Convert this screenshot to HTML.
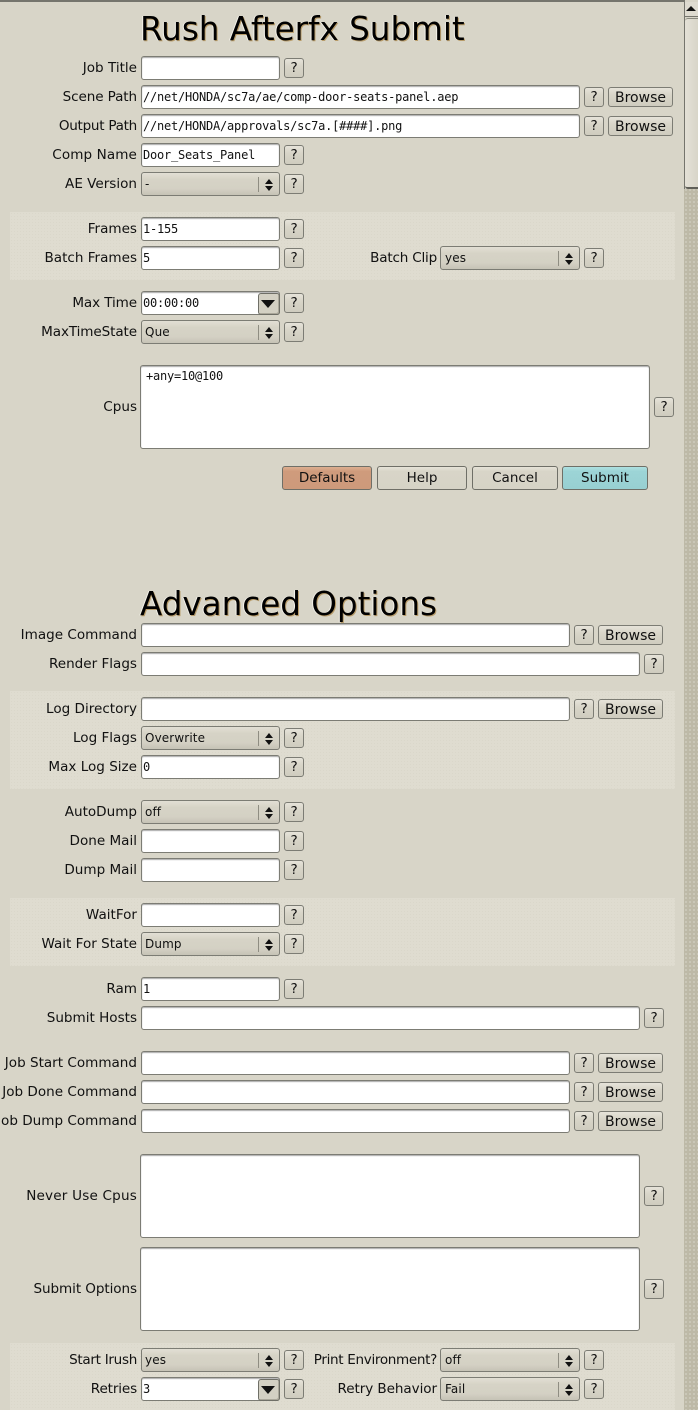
<!DOCTYPE html>
<html><head><meta charset="utf-8"><style>
html,body{margin:0;padding:0;background:#d8d5c8;}
body{position:relative;width:698px;height:1410px;overflow:hidden;font-family:"DejaVu Sans","Liberation Sans",sans-serif;color:#111;}
div,span{position:absolute;box-sizing:border-box;}
.top{left:0;top:0;width:684px;height:2px;background:#75756d;}
.h{left:140px;font-size:32.6px;line-height:38px;white-space:nowrap;color:#000;text-shadow:1px 1px 0 #b89c6a,-1px 0 0 #f4f2ea;}
.b{left:10px;width:665px;background:#dfdcd0;background-image:radial-gradient(#dad7ca .6px,transparent .8px);background-size:3px 3px;}
.l{right:561px;height:24px;line-height:25px;font-size:13.55px;white-space:nowrap;text-align:right;}
.i{left:141px;height:24px;background:#fff;border:1px solid #7c7c74;border-radius:3px;box-shadow:inset 0 1px 1px #aaa;font:12px/23px "DejaVu Sans Mono","Liberation Mono",monospace;letter-spacing:-.22px;padding-left:1px;color:#111;white-space:nowrap;}
.s{height:24px;width:139px;border:1px solid #7c7c74;border-radius:3px;background:linear-gradient(#e2dfd4,#d6d3c6 30%,#d4d1c4 70%,#c6c3b6);font:12px/23px "DejaVu Sans","Liberation Sans",sans-serif;letter-spacing:.12px;padding-left:3px;}
.s i{position:absolute;left:116px;top:4px;height:15px;width:1px;background:#8f8d82;}
.s b,.s u{position:absolute;left:123px;width:0;height:0;border-left:4px solid transparent;border-right:4px solid transparent;}
.s b{top:6px;border-bottom:5px solid #111;}.s u{top:13px;border-top:5px solid #111;}
.s.r{left:440px;width:140px;padding-left:4px;}
.s.r i{left:117px;}.s.r b,.s.r u{left:124px;}
.q,.br{height:20px;border:1px solid #7c7c74;border-radius:3px;background:linear-gradient(#e6e3d9,#d8d5c8 40%,#cfccbf);text-align:center;line-height:19px;}
.q{width:20px;font-family:"DejaVu Sans Mono",monospace;font-size:13.5px;}
.br{width:65px;font-size:14px;line-height:20px;}
.a{height:24px;top:466px;width:90px;border:1px solid #6f6f67;border-radius:3px;text-align:center;font-size:13.5px;line-height:22px;background:linear-gradient(#e6e3d8,#d8d5c8 20%,#d6d3c6);}
.c{left:141px;width:139px;}
.c i{position:absolute;left:116px;top:1px;width:20px;height:20px;background:#d3d0c3;border:1px solid #6f6f67;border-radius:3px;box-shadow:inset -1px -1px 0 #aaa79a;}
.c i:after{content:"";position:absolute;left:2px;top:6px;border-left:7px solid transparent;border-right:7px solid transparent;border-top:8px solid #111;}
.ta{left:140px;border:1px solid #7c7c74;border-radius:3px;background:#fff;box-shadow:inset 0 1px 1px #aaa;font:12px/16px "DejaVu Sans Mono","Liberation Mono",monospace;letter-spacing:-.22px;padding:2px 5px;}
</style></head><body>
<div class="top"></div>
<div class="h" style="top:10px">Rush Afterfx Submit</div>

<div class="l" style="top:56px">Job Title</div><div class="i" style="top:56px;width:139px"></div><div class="q" style="left:284px;top:58px">?</div>
<div class="l" style="top:85px;letter-spacing:-.1px">Scene Path</div><div class="i" style="top:85px;width:439px">//net/HONDA/sc7a/ae/comp-door-seats-panel.aep</div><div class="q" style="left:584px;top:87px">?</div><div class="br" style="left:608px;top:87px">Browse</div>
<div class="l" style="top:114px;letter-spacing:-.27px">Output Path</div><div class="i" style="top:114px;width:439px">//net/HONDA/approvals/sc7a.[####].png</div><div class="q" style="left:584px;top:116px">?</div><div class="br" style="left:608px;top:116px">Browse</div>
<div class="l" style="top:143px;letter-spacing:.1px">Comp Name</div><div class="i" style="top:143px;width:139px">Door_Seats_Panel</div><div class="q" style="left:284px;top:145px">?</div>
<div class="l" style="top:172px">AE Version</div><div class="s" style="left:141px;top:172px">-<i></i><b></b><u></u></div><div class="q" style="left:284px;top:174px">?</div>

<div class="b" style="top:212px;height:68px"></div>
<div class="l" style="top:217px">Frames</div><div class="i" style="top:217px;width:139px">1-155</div><div class="q" style="left:284px;top:219px">?</div>
<div class="l" style="top:246px">Batch Frames</div><div class="i" style="top:246px;width:139px">5</div><div class="q" style="left:284px;top:248px">?</div>
<div class="l" style="top:246px;right:261px;letter-spacing:-.2px">Batch Clip</div><div class="s r" style="top:246px">yes<i></i><b></b><u></u></div><div class="q" style="left:584px;top:248px">?</div>

<div class="l" style="top:291px;letter-spacing:-.1px">Max Time</div><div class="i c" style="top:291px">00:00:00<i></i></div><div class="q" style="left:284px;top:293px">?</div>
<div class="l" style="top:320px;letter-spacing:-.1px">MaxTimeState</div><div class="s" style="left:141px;top:320px">Que<i></i><b></b><u></u></div><div class="q" style="left:284px;top:322px">?</div>
<div class="l" style="top:395px">Cpus</div><div class="ta" style="top:365px;width:510px;height:84px">+any=10@100</div><div class="q" style="left:654px;top:397px">?</div>

<div class="a" style="left:282px;background:linear-gradient(#dcae90,#cf9b7c 20%,#cd9a7b)">Defaults</div>
<div class="a" style="left:377px">Help</div>
<div class="a" style="left:472px;width:86px">Cancel</div>
<div class="a" style="left:562px;width:86px;background:linear-gradient(#aee0e0,#9cd4d6 20%,#98d0d2)">Submit</div>

<div class="h" style="top:585px">Advanced Options</div>
<div class="l" style="top:623px">Image Command</div><div class="i" style="top:623px;width:429px"></div><div class="q" style="left:574px;top:625px">?</div><div class="br" style="left:598px;top:625px">Browse</div>
<div class="l" style="top:652px">Render Flags</div><div class="i" style="top:652px;width:499px"></div><div class="q" style="left:644px;top:654px">?</div>

<div class="b" style="top:691px;height:98px"></div>
<div class="l" style="top:697px">Log Directory</div><div class="i" style="top:697px;width:429px"></div><div class="q" style="left:574px;top:699px">?</div><div class="br" style="left:598px;top:699px">Browse</div>
<div class="l" style="top:726px">Log Flags</div><div class="s" style="left:141px;top:726px">Overwrite<i></i><b></b><u></u></div><div class="q" style="left:284px;top:728px">?</div>
<div class="l" style="top:755px">Max Log Size</div><div class="i" style="top:755px;width:139px">0</div><div class="q" style="left:284px;top:757px">?</div>

<div class="l" style="top:800px">AutoDump</div><div class="s" style="left:141px;top:800px">off<i></i><b></b><u></u></div><div class="q" style="left:284px;top:802px">?</div>
<div class="l" style="top:829px">Done Mail</div><div class="i" style="top:829px;width:139px"></div><div class="q" style="left:284px;top:831px">?</div>
<div class="l" style="top:858px">Dump Mail</div><div class="i" style="top:858px;width:139px"></div><div class="q" style="left:284px;top:860px">?</div>

<div class="b" style="top:898px;height:68px"></div>
<div class="l" style="top:903px">WaitFor</div><div class="i" style="top:903px;width:139px"></div><div class="q" style="left:284px;top:905px">?</div>
<div class="l" style="top:932px">Wait For State</div><div class="s" style="left:141px;top:932px">Dump<i></i><b></b><u></u></div><div class="q" style="left:284px;top:934px">?</div>

<div class="l" style="top:977px">Ram</div><div class="i" style="top:977px;width:139px">1</div><div class="q" style="left:284px;top:979px">?</div>
<div class="l" style="top:1006px">Submit Hosts</div><div class="i" style="top:1006px;width:499px"></div><div class="q" style="left:644px;top:1008px">?</div>

<div class="l" style="top:1051px">Job Start Command</div><div class="i" style="top:1051px;width:429px"></div><div class="q" style="left:574px;top:1053px">?</div><div class="br" style="left:598px;top:1053px">Browse</div>
<div class="l" style="top:1080px">Job Done Command</div><div class="i" style="top:1080px;width:429px"></div><div class="q" style="left:574px;top:1082px">?</div><div class="br" style="left:598px;top:1082px">Browse</div>
<div class="l" style="top:1109px">Job Dump Command</div><div class="i" style="top:1109px;width:429px"></div><div class="q" style="left:574px;top:1111px">?</div><div class="br" style="left:598px;top:1111px">Browse</div>

<div class="l" style="top:1184px;letter-spacing:.2px">Never Use Cpus</div><div class="ta" style="top:1154px;width:500px;height:84px"></div><div class="q" style="left:644px;top:1186px">?</div>
<div class="l" style="top:1277px;letter-spacing:-.08px">Submit Options</div><div class="ta" style="top:1247px;width:500px;height:84px"></div><div class="q" style="left:644px;top:1279px">?</div>

<div class="b" style="top:1343px;height:67px"></div>
<div class="l" style="top:1348px;letter-spacing:-.3px">Start Irush</div><div class="s" style="left:141px;top:1348px">yes<i></i><b></b><u></u></div><div class="q" style="left:284px;top:1350px">?</div>
<div class="l" style="top:1348px;right:261px;letter-spacing:-.33px">Print Environment?</div><div class="s r" style="top:1348px">off<i></i><b></b><u></u></div><div class="q" style="left:584px;top:1350px">?</div>
<div class="l" style="top:1377px;letter-spacing:-.14px">Retries</div><div class="i c" style="top:1377px">3<i></i></div><div class="q" style="left:284px;top:1379px">?</div>
<div class="l" style="top:1377px;right:261px;letter-spacing:-.07px">Retry Behavior</div><div class="s r" style="top:1377px">Fail<i></i><b></b><u></u></div><div class="q" style="left:584px;top:1379px">?</div>

<div style="left:684px;top:188px;width:14px;height:1222px;background:#bdb9a7;background-image:radial-gradient(#cfccbd .8px,transparent 1px);background-size:4px 4px"></div>
<div style="left:684px;top:0;width:14px;height:189px;background:#d8d5c8;border-left:1px solid #75756d"></div>
<div style="left:685px;top:2px;width:13px;height:15px;background:#dedbd0;border-bottom:1px solid #75756d"></div>
<div style="left:686px;top:6px;width:0;height:0;border-left:5px solid transparent;border-right:5px solid transparent;border-bottom:5px solid #111"></div>
<div style="left:685px;top:18px;width:13px;height:171px;background:linear-gradient(90deg,#e4e1d7,#d8d5c8);border-top:1px solid #8a8a80;border-bottom:2px solid #5f5f58;border-radius:3px 0 0 3px"></div>
</body></html>
